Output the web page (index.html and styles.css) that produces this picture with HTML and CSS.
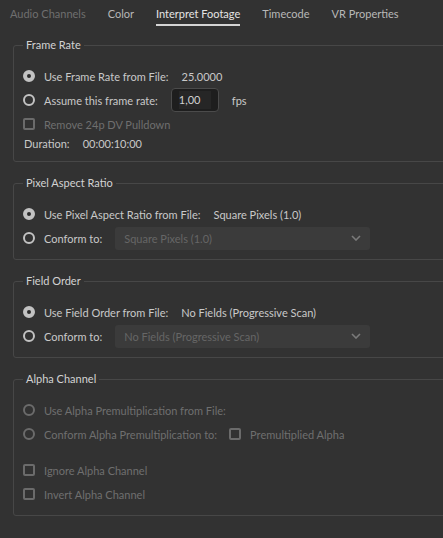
FILE: index.html
```html
<!DOCTYPE html>
<html lang="en">
<head>
  <meta charset="UTF-8" />
  <meta name="viewport" content="width=device-width, initial-scale=1.0"/>
  <title>Modify Clip</title>
  <link rel="stylesheet" href="styles.css">
</head>
<body>
  <nav class="tabs">
    <a class="tab disabled">Audio Channels</a>
    <a class="tab">Color</a>
    <a class="tab active">Interpret Footage</a>
    <a class="tab">Timecode</a>
    <a class="tab">VR Properties</a>
  </nav>

  <main class="panel">
    <fieldset class="group">
      <legend>Frame Rate</legend>
      <div class="row">
        <span class="radio checked"></span>
        <span class="label">Use Frame Rate from File:</span>
        <span class="value">25.0000</span>
      </div>
      <div class="row">
        <span class="radio"></span>
        <span class="label">Assume this frame rate:</span>
        <span class="field"><span class="field-text">1,00</span></span>
        <span class="label">fps</span>
      </div>
      <div class="row off">
        <span class="check"></span>
        <span class="label">Remove 24p DV Pulldown</span>
      </div>
      <div class="row duration">
        <span class="label">Duration:</span>
        <span class="value">00:00:10:00</span>
      </div>
    </fieldset>

    <fieldset class="group">
      <legend>Pixel Aspect Ratio</legend>
      <div class="row">
        <span class="radio checked"></span>
        <span class="label">Use Pixel Aspect Ratio from File:</span>
        <span class="value">Square Pixels (1.0)</span>
      </div>
      <div class="row">
        <span class="radio"></span>
        <span class="label">Conform to:</span>
        <div class="select">
          <span>Square Pixels (1.0)</span>
          <svg viewBox="0 0 10 6"><path d="M1 1l4 4 4-4"/></svg>
        </div>
      </div>
    </fieldset>

    <fieldset class="group">
      <legend>Field Order</legend>
      <div class="row">
        <span class="radio checked"></span>
        <span class="label">Use Field Order from File:</span>
        <span class="value">No Fields (Progressive Scan)</span>
      </div>
      <div class="row">
        <span class="radio"></span>
        <span class="label">Conform to:</span>
        <div class="select">
          <span>No Fields (Progressive Scan)</span>
          <svg viewBox="0 0 10 6"><path d="M1 1l4 4 4-4"/></svg>
        </div>
      </div>
    </fieldset>

    <fieldset class="group">
      <legend>Alpha Channel</legend>
      <div class="row off">
        <span class="radio"></span>
        <span class="label">Use Alpha Premultiplication from File:</span>
      </div>
      <div class="row off">
        <span class="radio"></span>
        <span class="label">Conform Alpha Premultiplication to:</span>
        <span class="check inline"></span>
        <span class="label">Premultiplied Alpha</span>
      </div>
      <div class="spacer"></div>
      <div class="row off">
        <span class="check"></span>
        <span class="label">Ignore Alpha Channel</span>
      </div>
      <div class="row off">
        <span class="check"></span>
        <span class="label">Invert Alpha Channel</span>
      </div>
    </fieldset>
  </main>
</body>
</html>
```

FILE: styles.css
```css
:root {
  --bg: #323232;
  --line: #474747;
  --text: #c9c9c9;
  --text-dim: #6f6f6f;
  --control: #c2c2c2;
}
* {
  margin: 0;
  padding: 0;
  box-sizing: border-box;
}
body {
  font-family: 'Lato', 'Liberation Sans', sans-serif;
  font-size: 11px;
  background: var(--bg);
  color: var(--text);
  overflow: hidden;
}

/* tab strip */
.tabs {
  display: flex;
  gap: 22px;
  padding-left: 10px;
}
.tab {
  padding: 6px 0 2px;
  line-height: 16px;
  border-bottom: 2px solid transparent;
  color: #b8b8b8;
}
.tab.disabled {
  color: var(--text-dim);
}
.tab.active {
  color: #e4e4e4;
  border-bottom-color: #d4d4d4;
}

/* groups */
.panel {
  padding: 11px 0 0 13px;
  margin-right: -12px;
}
.group {
  border: 1px solid var(--line);
  border-radius: 3px;
  padding: 11px 0 9px 9px;
  margin-bottom: 13px;
}
.group legend {
  padding: 0 3px;
  line-height: 16px;
  color: #d2d2d2;
}
.row {
  display: flex;
  align-items: center;
  height: 24px;
  gap: 13px;
}
.row.off {
  color: var(--text-dim);
}
.row.duration {
  height: 18px;
  margin-top: -2px;
  padding-left: 1px;
}
.spacer {
  height: 12px;
}
.radio, .check {
  width: 12px;
  height: 12px;
  flex-shrink: 0;
  margin-right: -4px;
}
.radio {
  border: 2px solid var(--control);
  border-radius: 50%;
}
.radio.checked {
  border-width: 4px;
  background: #2a2a2a;
}
.check {
  border: 2px solid #6b6b6b;
  border-radius: 2px;
}
.check.inline {
  margin-left: -1px;
}
.row.off .radio {
  border-color: #6b6b6b;
}

/* inputs */
.field {
  width: 48px;
  height: 24px;
  background: #1e1e1e;
  border: 1px solid #4b4b4b;
  border-radius: 4px;
  padding: 2px 7px;
  display: flex;
  align-items: center;
}
.field-text {
  display: block;
  width: 32px;
  height: 18px;
  line-height: 18px;
  background: #262626;
  color: #d0d0d0;
}
.select {
  width: 255px;
  height: 23px;
  background: #3b3b3b;
  border-radius: 3px;
  display: flex;
  align-items: center;
  justify-content: space-between;
  padding: 0 9px;
  color: #666666;
}
.select svg {
  width: 10px;
  height: 6px;
  fill: none;
  stroke: #7a7a7a;
  stroke-width: 1.6;
}
```
